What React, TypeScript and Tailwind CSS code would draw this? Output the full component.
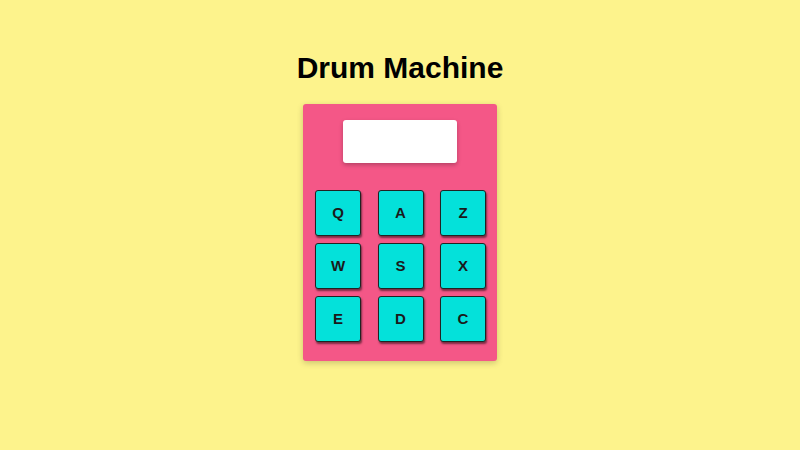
import React from "react";

const keys = ["Q", "A", "Z", "W", "S", "X", "E", "D", "C"];

export default function App() {
  return (
    <div
      className="w-full min-h-[450px] bg-[#fdf38c] flex flex-col items-center pt-[50px]"
      style={{ fontFamily: '"Liberation Sans", Arial, sans-serif' }}
    >
      <h1 className="text-[30px] leading-[36px] font-bold text-black">Drum Machine</h1>
      <div className="mt-[18px] w-[194px] h-[257px] bg-[#f45787] rounded-[3px] shadow-[0_2px_6px_rgba(0,0,0,0.2)] flex flex-col items-center pt-[16px] px-[12px]">
        <div className="w-[114px] h-[43px] bg-white rounded-[3px] shadow-[0_2px_4px_rgba(0,0,0,0.25)]" />
        <div className="mt-[27px] w-full grid grid-cols-[46px_46px_46px] gap-x-[16.5px] gap-y-[7px]">
          {keys.map((k) => (
            <button
              key={k}
              className="w-[46px] h-[46px] bg-[#04e1da] border-[1.5px] border-[#222] rounded-[3px] shadow-[1px_2px_2px_rgba(0,0,0,0.5)] flex items-center justify-center text-[15px] font-bold text-[#1a1a1a]"
            >
              {k}
            </button>
          ))}
        </div>
      </div>
    </div>
  );
}
